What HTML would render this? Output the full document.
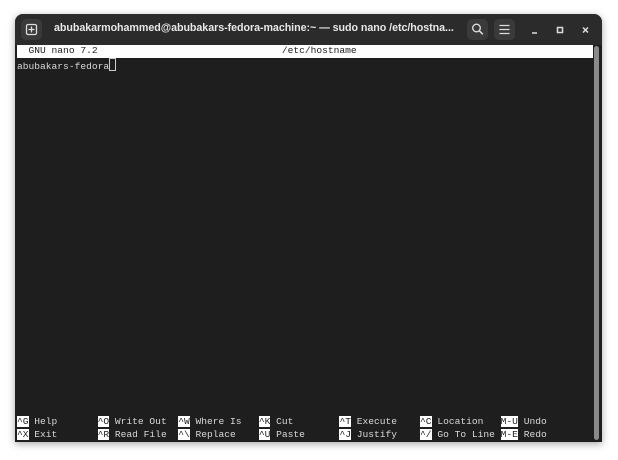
<!DOCTYPE html>
<html><head><style>
html,body{margin:0;padding:0;width:618px;height:460px;background:#fff;overflow:hidden}
.win{position:absolute;left:15px;top:14px;width:587px;height:428px;background:#1e1e1e;border-radius:8px 8px 0 0;box-shadow:0 2px 8px rgba(0,0,0,.35);overflow:hidden}
.tb{position:absolute;left:0;top:0;width:587px;height:31px;background:#2b2b2b}
.btn{position:absolute;top:5px;width:21px;height:21px;background:#3a3a3a;border-radius:5px}
.title{position:absolute;left:39px;top:8px;font:bold 10.7px "Liberation Sans",sans-serif;color:#e8e8e8;white-space:nowrap;letter-spacing:-0.05px}
.term{position:absolute;left:2px;top:31px;font-family:"Liberation Mono",monospace;font-size:9.6px;line-height:12.69px;color:#d8d8d8;white-space:pre}
.hdr{background:#fff;color:#222;width:576px;display:block}
.k{background:#fff;color:#222}
.cur{display:inline-block;width:5px;height:11px;border:1px solid #ccc;vertical-align:-2px;margin-left:0}
.sb{position:absolute;left:579px;top:32px;width:5px;height:394px;background:#8a8a8a;border-radius:3px}
</style></head><body>
<div class="win">
 <div class="tb">
  <div class="btn" style="left:6px"><svg width="21" height="21"><rect x="5.5" y="5.5" width="10" height="10" rx="1.5" fill="none" stroke="#ddd" stroke-width="1.3"/><path d="M10.5 7.5v6M7.5 10.5h6" stroke="#ddd" stroke-width="1.3"/></svg></div>
  <div class="title">abubakarmohammed@abubakars-fedora-machine:~ — sudo nano /etc/hostna...</div>
  <div class="btn" style="left:452px"><svg width="21" height="21"><circle cx="9.5" cy="9" r="3.8" fill="none" stroke="#ddd" stroke-width="1.4"/><path d="M12.3 11.8l3.5 3.5" stroke="#ddd" stroke-width="1.5"/></svg></div>
  <div class="btn" style="left:479px"><svg width="21" height="21"><path d="M5.5 6.5h10M5.5 10.5h10M5.5 14.5h10" stroke="#ddd" stroke-width="1.3"/></svg></div>
  <svg style="position:absolute;left:512px;top:8px" width="70" height="16"><path d="M5 11h5" stroke="#ddd" stroke-width="1.6"/><rect x="30.5" y="5.5" width="5" height="5" fill="none" stroke="#ddd" stroke-width="1.5"/><path d="M56 5.5l5 5M61 5.5l-5 5" stroke="#ddd" stroke-width="1.5"/></svg>
 </div>
 <div class="term"><span class="hdr">  GNU nano 7.2                                /etc/hostname                                         </span>abubakars-fedora<span class="cur"></span>


























 
<span class="k">^G</span> Help       <span class="k">^O</span> Write Out  <span class="k">^W</span> Where Is   <span class="k">^K</span> Cut        <span class="k">^T</span> Execute    <span class="k">^C</span> Location   <span class="k">M-U</span> Undo
<span class="k">^X</span> Exit       <span class="k">^R</span> Read File  <span class="k">^\</span> Replace    <span class="k">^U</span> Paste      <span class="k">^J</span> Justify    <span class="k">^/</span> Go To Line <span class="k">M-E</span> Redo</div>
 <div class="sb"></div>
</div>
</body></html>
